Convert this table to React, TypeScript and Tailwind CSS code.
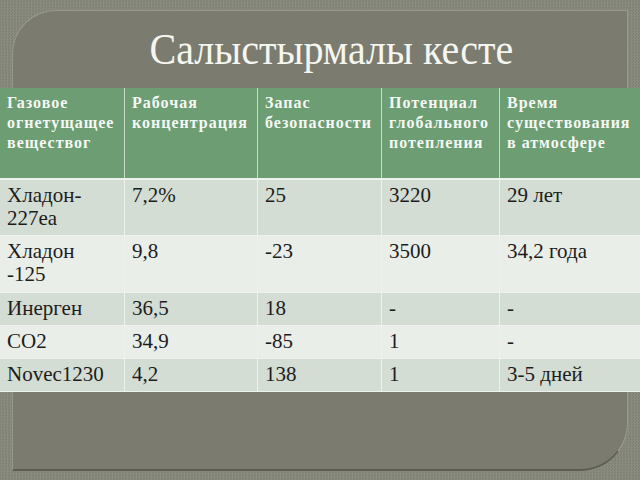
import React from "react";

const header: string[][] = [
  ["Газовое", "огнетущащее", "веществог"],
  ["Рабочая", "концентрация"],
  ["Запас", "безопасности"],
  ["Потенциал", "глобального", "потепления"],
  ["Время", "существования", "в атмосфере"],
];

const rows: { h: string; cells: string[][] }[] = [
  { h: "h-[55px]", cells: [["Хладон-", "227ea"], ["7,2%"], ["25"], ["3220"], ["29 лет"]] },
  { h: "h-[56px]", cells: [["Хладон", "-125"], ["9,8"], ["-23"], ["3500"], ["34,2 года"]] },
  { h: "h-[32px]", cells: [["Инерген"], ["36,5"], ["18"], ["-"], ["-"]] },
  { h: "h-[32px]", cells: [["CO2"], ["34,9"], ["-85"], ["1"], ["-"]] },
  { h: "h-[32px]", cells: [["Novec1230"], ["4,2"], ["138"], ["1"], ["3-5 дней"]] },
];

export default function App() {
  return (
    <div className="w-[640px] h-[480px] overflow-hidden px-[12px] pt-[10px] pb-[9px] bg-[#85877a] bg-[repeating-conic-gradient(#8a8c7f_0_25%,#7f8174_0_50%)] bg-[length:3px_3px]">
      <div className="h-full flex flex-col bg-[#7b7c6f] rounded-tl-[44px] rounded-br-[48px] border-t border-l border-r border-[#979a8b] border-b-2 border-b-[#5d5e53]">
        <div className="h-[77px] flex items-center justify-center pl-[22px]">
          <h1 className="inline-block scale-x-[0.89] text-[45px] leading-none text-[#f6f6f1] font-['Liberation_Serif','Times_New_Roman',serif] font-normal">
            Салыстырмалы кесте
          </h1>
        </div>
        <div className="-mx-[13px] flex flex-col gap-px bg-[#eef2ee] pb-px">
          <div className="h-[90px] mb-px grid grid-cols-[124px_132px_123px_117px_1fr] gap-x-px bg-[#c9dbc9]">
            {header.map((lines, i) => (
              <div key={i} className="bg-[#6d9d72] pl-[7px] pt-[5px] text-[16px] leading-[20px] font-bold tracking-[1px] text-[#f5f8f4] font-['Liberation_Serif','Times_New_Roman',serif]">
                {lines.map((l, j) => (
                  <div key={j} className="whitespace-nowrap">{l}</div>
                ))}
              </div>
            ))}
          </div>
          {rows.map((r, ri) => (
            <div key={ri} className={`${r.h} grid grid-cols-[124px_132px_123px_117px_1fr] gap-x-px`}>
              {r.cells.map((lines, ci) => (
                <div
                  key={ci}
                  className={`${ri % 2 === 0 ? "bg-[#d3ddd3]" : "bg-[#e9eee9]"} pl-[7px] pt-[4px] text-[21px] leading-[23px] font-normal text-[#1c1c1c] font-['Liberation_Serif','Times_New_Roman',serif]`}
                >
                  {lines.map((l, j) => (
                    <div key={j} className="whitespace-nowrap">{l}</div>
                  ))}
                </div>
              ))}
            </div>
          ))}
        </div>
      </div>
    </div>
  );
}
